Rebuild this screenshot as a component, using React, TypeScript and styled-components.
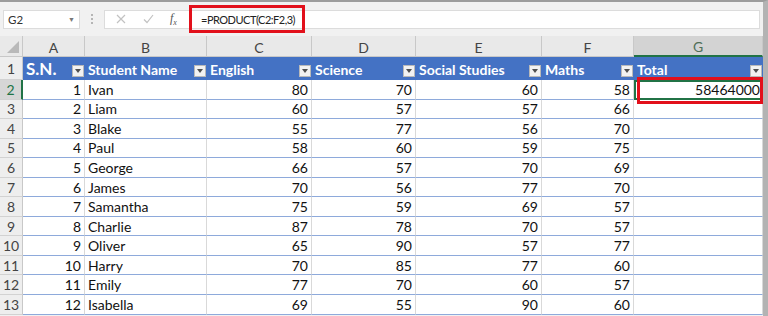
import React from 'react'
import styled, { createGlobalStyle, css } from 'styled-components'
// ______________________________________________________
//
const GlobalStyle = createGlobalStyle`
  html, body {
    margin: 0;
    padding: 0;
    background: #ffffff;
  }
  body {
    font-family: Lato, "Liberation Sans", sans-serif;
  }
`
// ______________________________________________________
//
const green = '#217346'
const bandLine = '#8eaadb'
const gridLine = '#d9d9d9'
const columns = ['A', 'B', 'C', 'D', 'E', 'F', 'G']
const headers = ['S.N.', 'Student Name', 'English', 'Science', 'Social Studies', 'Maths', 'Total']
const students: [string, number, number, number, number][] = [
  ['Ivan', 80, 70, 60, 58],
  ['Liam', 60, 57, 57, 66],
  ['Blake', 55, 77, 56, 70],
  ['Paul', 58, 60, 59, 75],
  ['George', 66, 57, 70, 69],
  ['James', 70, 56, 77, 70],
  ['Samantha', 75, 59, 69, 57],
  ['Charlie', 87, 78, 70, 57],
  ['Oliver', 65, 90, 57, 77],
  ['Harry', 70, 85, 77, 60],
  ['Emily', 77, 70, 60, 57],
  ['Isabella', 69, 55, 90, 60],
]
// ______________________________________________________
//
const Frame = styled.div`
  width: 768px;
  height: 316px;
  box-sizing: border-box;
  border-top: 2px solid #9c9c9c;
  border-right: 5px solid #b3b3b3;
  background: #f1f1f1;
  overflow: hidden;
`
const FormulaBar = styled.div`
  height: 34px;
  display: flex;
  align-items: center;
  padding-left: 3px;
  font-size: 11.5px;
  color: #333;
`
const NameBox = styled.div`
  width: 77px;
  height: 19px;
  box-sizing: border-box;
  background: #fff;
  border: 1px solid #dcdcdc;
  display: flex;
  align-items: center;
  justify-content: space-between;
  padding: 0 4px 0 4px;
  > .arrow {
    font-size: 7px;
    color: #777;
  }
`
const Dots = styled.div`
  width: 24px;
  display: flex;
  flex-direction: column;
  align-items: center;
  gap: 2px;
  > span {
    width: 2px;
    height: 2px;
    background: #b5b5b5;
  }
`
const FormulaInput = styled.div`
  flex: 1;
  height: 19px;
  margin-right: 3px;
  box-sizing: border-box;
  background: #fff;
  border: 1px solid #dcdcdc;
  display: flex;
  align-items: center;
  padding-left: 11px;
`
const ToolIcon = styled.span<{ $dark?: boolean }>`
  width: 27px;
  display: flex;
  align-items: center;
  color: ${p => (p.$dark ? '#555' : '#c2c2c2')};
`
const Fx = styled.span`
  width: 28px;
  font-family: "Liberation Serif", serif;
  font-style: italic;
  font-size: 12px;
  color: #555;
`
const FormulaText = styled.span`
  position: relative;
  padding-left: 3px;
  font-size: 11px;
  letter-spacing: -0.5px;
  color: #222;
  &::after {
    content: '';
    position: absolute;
    left: -9px;
    right: -10px;
    top: -8px;
    bottom: -7px;
    border: 3px solid #e2101b;
  }
`
// ______________________________________________________
//
const Sheet = styled.div`
  display: grid;
  grid-template-columns: 23px 62px 122px 105px 104px 126px 92px 129px;
  grid-template-rows: 21px 23px repeat(12, 19.55px);
  background: #fff;
  font-size: 14px;
  color: #111;
`
const Corner = styled.div`
  background: #e9e9e9;
  border-right: 1px solid #c8c8c8;
  border-bottom: 1px solid #c8c8c8;
  position: relative;
  &::after {
    content: '';
    position: absolute;
    right: 3px;
    bottom: 3px;
    border-style: solid;
    border-width: 0 0 12px 12px;
    border-color: transparent transparent #b9b9b9 transparent;
  }
`
const ColHead = styled.div<{ $selected?: boolean }>`
  display: flex;
  align-items: center;
  justify-content: center;
  padding-top: 2px;
  box-sizing: border-box;
  background: #e9e9e9;
  border-right: 1px solid #c8c8c8;
  border-bottom: 1px solid #c8c8c8;
  color: #444;
  ${p =>
    p.$selected &&
    css`
      background: #d3d3d3;
      border-bottom: 2px solid ${green};
      color: #4f6e58;
    `}
`
const RowHead = styled.div<{ $selected?: boolean }>`
  display: flex;
  align-items: center;
  justify-content: center;
  background: #eeeeee;
  border-right: 1px solid #c8c8c8;
  border-bottom: 1px solid #d2d2d2;
  color: #444;
  ${p =>
    p.$selected &&
    css`
      background: #d6d6d6;
      border-right: 2px solid ${green};
      color: ${green};
    `}
`
const HeadCell = styled.div<{ $big?: boolean }>`
  display: flex;
  align-items: flex-end;
  justify-content: space-between;
  padding: 0 1px 2px 3px;
  box-sizing: border-box;
  background: #4472c4;
  color: #fff;
  font-weight: 700;
  font-size: ${p => (p.$big ? '17px' : '14px')};
  line-height: ${p => (p.$big ? '19px' : '16px')};
  white-space: nowrap;
`
const FilterBtn = styled.span`
  width: 12px;
  height: 12px;
  margin-bottom: 1px;
  box-sizing: border-box;
  background: #f2f2f2;
  border: 1px solid #b9b9b9;
  display: flex;
  align-items: center;
  justify-content: center;
  &::before {
    content: '';
    border-style: solid;
    border-width: 4px 3.5px 0 3.5px;
    border-color: #505050 transparent transparent transparent;
  }
`
const Cell = styled.div<{ $num?: boolean; $active?: boolean }>`
  display: flex;
  align-items: center;
  justify-content: ${p => (p.$num ? 'flex-end' : 'flex-start')};
  padding: 0 3px;
  box-sizing: border-box;
  border-right: 1px solid ${gridLine};
  border-bottom: 1px solid ${bandLine};
  white-space: nowrap;
  ${p =>
    p.$active &&
    css`
      position: relative;
      border: 2px solid ${green};
      padding-right: 1px;
      &::after {
        content: '';
        position: absolute;
        left: 1px;
        right: -2px;
        top: -5px;
        bottom: -6px;
        border: 3px solid #e2101b;
      }
    `}
`
// ______________________________________________________
//
const App: React.FC = () => (
  <>
    <GlobalStyle />
    <Frame>
      <FormulaBar>
        <NameBox>
          <span>G2</span>
          <span className="arrow">▼</span>
        </NameBox>
        <Dots>
          <span />
          <span />
          <span />
        </Dots>
        <FormulaInput>
          <ToolIcon>
            <svg width="10" height="10" viewBox="0 0 10 10">
              <path d="M1 1 L9 9 M9 1 L1 9" stroke="currentColor" strokeWidth="1.2" />
            </svg>
          </ToolIcon>
          <ToolIcon>
            <svg width="11" height="10" viewBox="0 0 11 10">
              <path d="M1 5.5 L4 8.5 L10 1" stroke="currentColor" strokeWidth="1.2" fill="none" />
            </svg>
          </ToolIcon>
          <Fx>
            f<sub style={{ fontSize: 8 }}>x</sub>
          </Fx>
          <FormulaText>=PRODUCT(C2:F2,3)</FormulaText>
        </FormulaInput>
      </FormulaBar>
      <Sheet>
        <Corner />
        {columns.map(c => (
          <ColHead key={c} $selected={c === 'G'}>
            {c}
          </ColHead>
        ))}
        <RowHead>1</RowHead>
        {headers.map((h, i) => (
          <HeadCell key={h} $big={i === 0}>
            <span>{h}</span>
            <FilterBtn />
          </HeadCell>
        ))}
        {students.map(([name, en, sc, ss, ma], i) => (
          <React.Fragment key={name}>
            <RowHead $selected={i === 0}>{i + 2}</RowHead>
            <Cell $num>{i + 1}</Cell>
            <Cell>{name}</Cell>
            <Cell $num>{en}</Cell>
            <Cell $num>{sc}</Cell>
            <Cell $num>{ss}</Cell>
            <Cell $num>{ma}</Cell>
            <Cell $num $active={i === 0}>
              {i === 0 ? en * sc * ss * ma * 3 : ''}
            </Cell>
          </React.Fragment>
        ))}
      </Sheet>
    </Frame>
  </>
)
// ______________________________________________________
//
export default App
